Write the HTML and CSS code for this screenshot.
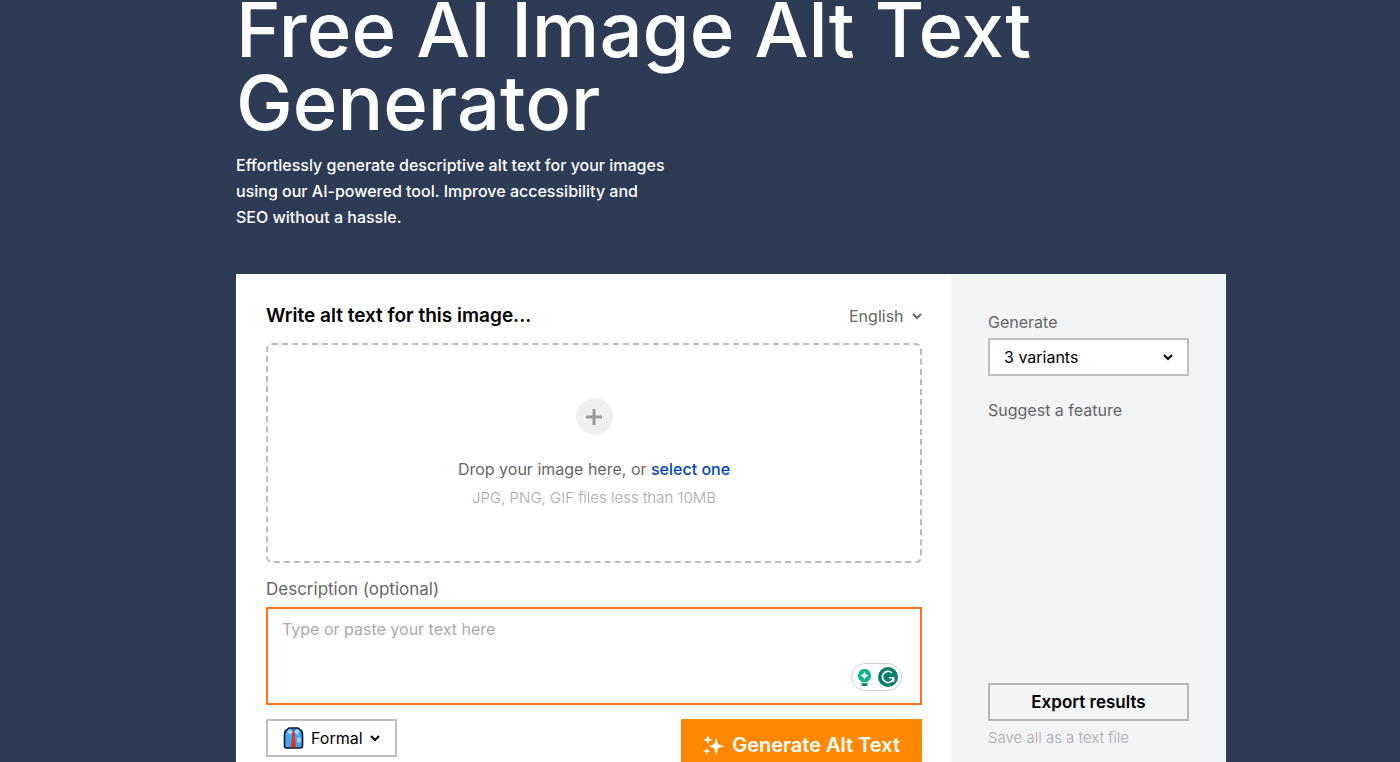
FILE: index.html
```
<!DOCTYPE html>
<html lang="en">
<head>
  <meta charset="UTF-8" />
  <meta name="viewport" content="width=device-width, initial-scale=1.0"/>
  <title>Free AI Image Alt Text Generator</title>
  <link rel="stylesheet" href="styles.css">
</head>
<body>

  <div class="page">
    <!-- Page intro -->
    <header class="intro">
      <h1>Free AI Image Alt Text Generator</h1>
      <p>Effortlessly generate descriptive alt text for your images using our AI-powered tool. Improve accessibility and SEO without a hassle.</p>
    </header>

    <!-- Generator tool -->
    <main class="tool">
      <section class="editor">
        <div class="editor-head">
          <h2>Write alt text for this image...</h2>
          <div class="language">
            <select aria-label="Language">
              <option>English</option>
            </select>
            <svg class="chevron" viewBox="0 0 10 10"><path d="M1 3l4 4 4-4"/></svg>
          </div>
        </div>

        <div class="dropzone">
          <button class="add" type="button" aria-label="Add image">
            <svg viewBox="0 0 18 18"><path d="M9 1v16M1 9h16"/></svg>
          </button>
          <p class="drop-text">Drop your image here, or <a href="#">select one</a></p>
          <p class="drop-hint">JPG, PNG, GIF files less than 10MB</p>
        </div>

        <label class="label" for="description">Description (optional)</label>
        <div class="text-wrap">
          <textarea id="description" placeholder="Type or paste your text here"></textarea>
          <div class="assistant">
            <svg class="bulb" viewBox="0 0 16 20">
              <path d="M8 1a7 7 0 0 0-4 12.700l1 1.300h6l1-1.300A7 7 0 0 0 8 1z" fill="#0bb58c"/>
              <path d="M8 3.500l1.400 3.100L12.500 8 9.400 9.400 8 12.500 6.600 9.400 3.500 8l3.100-1.400z" fill="#fff"/>
              <path d="M4.500 16h7v1a2 2 0 0 1-2 2h-3a2 2 0 0 1-2-2z" fill="#087f6c"/>
            </svg>
            <svg class="grammar" viewBox="0 0 20 20">
              <circle cx="10" cy="10" r="10" fill="#087f6c"/>
              <path d="M14 6A5.600 5.600 0 1 0 15.500 11M11 10.800h4.600v4" fill="none" stroke="#fff" stroke-width="1.600"/>
            </svg>
          </div>
        </div>

        <div class="actions">
          <button class="tone" type="button">
            <svg class="shirt" viewBox="0 0 20 22">
              <path d="M5.500 1h9l2.500 2q2 1 2 5v11q0 2-2 2H3q-2 0-2-2V8q0-4 2-5z" fill="#42a5f5" stroke="#101820" stroke-width="1.600"/>
              <path d="M8 4h4l-.8 3 1.300 13.200h-5L8.800 7z" fill="#e6301c"/>
              <path d="M6 2l3.500 3L6 8 4 4zM14 2l-3.500 3L14 8l2-4z" fill="#a5d8fa"/>
              <path d="M7 1.800h6l-3 2z" fill="#1c66ad"/>
              <path d="M13.500 10.500h4v5h-4z" fill="#9bd0f7"/>
            </svg>
            Formal
            <svg class="chevron" viewBox="0 0 10 10"><path d="M1 3l4 4 4-4"/></svg>
          </button>
          <button class="generate" type="button">
            <svg class="sparkles" viewBox="0 0 20 20">
              <path d="M12.500 2.500l1.800 6.200 5.700 2-5.700 2-1.800 6.800-1.800-6.800-5.200-2 5.200-2z"/>
              <path d="M4.500 0l1.200 3.300L9 4.500 5.700 5.700 4.500 9 3.300 5.700 0 4.500l3.300-1.200z"/>
              <path d="M3.500 12l1 2.500 2.500 1-2.500 1-1 2.500-1-2.500-2.500-1 2.500-1z"/>
            </svg>
            Generate Alt Text
          </button>
        </div>
      </section>

      <aside class="side">
        <label class="label" for="variants">Generate</label>
        <div class="variants">
          <select id="variants">
            <option>3 variants</option>
          </select>
          <svg class="chevron" viewBox="0 0 10 10"><path d="M1 3l4 4 4-4"/></svg>
        </div>
        <a class="suggest" href="#">Suggest a feature</a>
        <div class="export">
          <button type="button">Export results</button>
          <p>Save all as a text file</p>
        </div>
      </aside>
    </main>
  </div>

</body>
</html>
```
FILE: styles.css
```
* {
  box-sizing: border-box;
}

body {
  margin: 0;
  height: 100vh;
  overflow: hidden;
  background: #2e3b55;
  color: #000;
  font-family: Inter, "Liberation Sans", sans-serif;
  font-size: 16px;
  line-height: 20px;
}

h1, h2, p {
  margin: 0;
}

button, select, textarea {
  font: inherit;
  color: inherit;
  border-radius: 0;
}

button, select {
  cursor: pointer;
}

a {
  text-decoration: none;
}

.page {
  padding: 0 174px 0 236px;
}

/* Page intro */
.intro {
  margin-top: -7px;
  color: #fff;
}

.intro h1 {
  font-size: 76px;
  font-weight: 500;
  line-height: 73px;
}

.intro p {
  max-width: 436px;
  margin-top: 13px;
  font-size: 16px;
  font-weight: 500;
  line-height: 26px;
}

/* Tool card */
.tool {
  display: grid;
  grid-template-columns: 1fr 275px;
  margin-top: 44px;
  background: #fff;
}

.editor {
  padding: 30px 29px 30px 30px;
}

.editor-head {
  display: flex;
  align-items: center;
  justify-content: space-between;
  height: 24px;
  margin-bottom: 15px;
}

.editor-head h2 {
  font-size: 19px;
  font-weight: 600;
}

.chevron {
  width: 10px;
  height: 10px;
  fill: none;
  stroke: currentColor;
  stroke-width: 2;
  pointer-events: none;
}

.language {
  display: flex;
  align-items: center;
  gap: 8px;
  color: #666;
}

select {
  appearance: none;
  border: 0;
  padding: 0;
  background: none;
}

.dropzone {
  display: flex;
  flex-direction: column;
  align-items: center;
  padding: 53px 20px;
  border: 2px dashed #bbb;
  border-radius: 6px;
}

.add {
  display: flex;
  align-items: center;
  justify-content: center;
  width: 37px;
  height: 37px;
  padding: 0;
  border: 0;
  border-radius: 50%;
  background: #f0f0f0;
}

.add svg {
  width: 18px;
  height: 18px;
  stroke: #999;
  stroke-width: 3;
}

.drop-text {
  margin-top: 24px;
  color: #666;
}

.drop-text a {
  color: #0044cc;
  font-weight: 500;
}

.drop-hint {
  margin-top: 9px;
  color: #aaa;
  font-size: 15px;
  font-weight: 300;
}

.label {
  display: block;
  color: #666;
}

.editor .label {
  margin: 16px 0 8px;
  font-size: 17px;
}

.text-wrap {
  position: relative;
}

textarea {
  display: block;
  width: 100%;
  height: 98px;
  padding: 10px 14px;
  border: 2px solid #ff7410;
  outline: 0;
  resize: none;
}

textarea::placeholder {
  color: #aaa;
}

.assistant {
  position: absolute;
  right: 20px;
  bottom: 14px;
  display: flex;
  align-items: center;
  justify-content: space-between;
  width: 51px;
  height: 28px;
  padding: 0 3px 0 5px;
  border: 1px solid #cfd0dc;
  border-radius: 14px;
  background: #fff;
}

.bulb {
  width: 15px;
  height: 19px;
}

.grammar {
  width: 20px;
  height: 20px;
}

.actions {
  display: flex;
  align-items: flex-start;
  justify-content: space-between;
  margin-top: 14px;
}

.tone {
  display: flex;
  align-items: center;
  gap: 7px;
  height: 38px;
  padding: 0 15px;
  border: 2px solid #bfbfbf;
  background: #fff;
}

.shirt {
  width: 21px;
  height: 22px;
}

.generate {
  display: flex;
  align-items: center;
  gap: 8px;
  height: 52px;
  padding: 0 22px;
  border: 0;
  background: #ff8800;
  color: #fff;
  font-size: 20px;
  font-weight: 600;
}

.sparkles {
  width: 21px;
  height: 21px;
  fill: #fff;
}

/* Side panel */
.side {
  display: flex;
  flex-direction: column;
  padding: 38px 37px 53px;
  background: #f3f4f6;
}

.variants {
  display: flex;
  align-items: center;
  height: 38px;
  margin-top: 6px;
  padding-right: 14px;
  border: 2px solid #bfbfbf;
  background: #fff;
}

.variants select {
  flex: 1;
  height: 100%;
  padding-left: 14px;
}

.suggest {
  margin-top: 24px;
  color: #666;
}

.export {
  margin-top: auto;
}

.export button {
  width: 100%;
  height: 38px;
  border: 2px solid #b5b7ba;
  background: none;
  font-size: 17px;
  font-weight: 600;
}

.export p {
  margin-top: 7px;
  color: #aaa;
  font-size: 15px;
  font-weight: 300;
}
```
